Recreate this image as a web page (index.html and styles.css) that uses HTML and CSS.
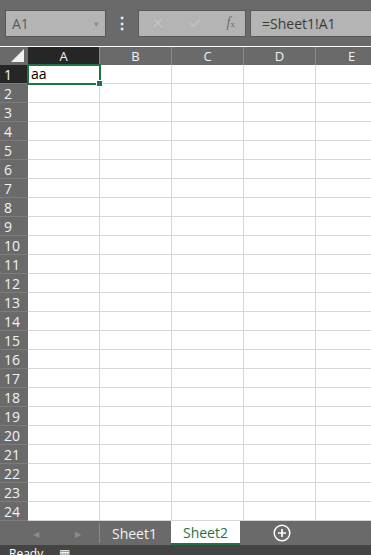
FILE: index.html
```html
<!DOCTYPE html>
<html>
<head>
    <title>Sheet</title>
    <meta charset="utf-8">
    <link rel="stylesheet" href="styles.css">
</head>
<body>

<div class="toolbar">
    <div class="name-box">
        <span>A1</span>
        <span class="drop">&#9662;</span>
    </div>
    <div class="dots">&#8942;</div>
    <div class="fx-buttons">
        <svg width="10" height="10" viewBox="0 0 10 10"><path d="M1 1L9 9M9 1L1 9" stroke="#c4c4c4" stroke-width="1.4"/></svg>
        <svg width="12" height="10" viewBox="0 0 12 10"><path d="M1 5L4.5 8.5L11 1.5" stroke="#c4c4c4" stroke-width="1.4" fill="none"/></svg>
        <span class="fx"><i>f</i><small>x</small></span>
    </div>
    <div class="formula">=Sheet1!A1</div>
</div>

<div class="sheet" id="sheet">
    <div class="corner"><div class="tri"></div></div>
    <div class="col-head selected">A</div>
    <div class="col-head">B</div>
    <div class="col-head">C</div>
    <div class="col-head">D</div>
    <div class="col-head">E</div>
    <div class="selection"><div class="handle"></div></div>
</div>

<div class="tabs">
    <div class="arrows">
        <span>&#9664;</span>
        <span>&#9654;</span>
    </div>
    <div class="tab">Sheet1</div>
    <div class="tab active">Sheet2</div>
    <div class="add">
        <svg width="18" height="18" viewBox="0 0 18 18"><circle cx="9" cy="9" r="7.8" stroke="#fff" stroke-width="1.5" fill="none"/><path d="M9 5V13M5 9H13" stroke="#fff" stroke-width="1.7"/></svg>
    </div>
</div>

<div class="status">Ready &nbsp; &nbsp; &#9638;</div>

<script>
(function () {
    var sheet = document.getElementById("sheet");
    var cols = 5;
    for (var r = 1; r <= 24; r++) {
        var head = document.createElement("div");
        head.className = "row-head" + (r === 1 ? " selected" : "");
        head.textContent = r;
        sheet.appendChild(head);
        for (var c = 0; c < cols; c++) {
            var cell = document.createElement("div");
            cell.className = "cell";
            if (r === 1 && c === 0) cell.textContent = "aa";
            sheet.appendChild(cell);
        }
    }
})();
</script>

</body>
</html>
```

FILE: styles.css
```css
body {
    margin: 0px;
    width: 371px;
    height: 555px;
    overflow: hidden;
    background: #6a6a6a;
    font-family: "Open Sans", "Noto Sans", sans-serif;
}

.toolbar {
    display: flex;
    align-items: center;
    height: 46px;
    padding-left: 5px;
    background: #6a6a6a;
    box-sizing: border-box;
}

.name-box {
    display: flex;
    align-items: center;
    justify-content: space-between;
    width: 101px;
    height: 27px;
    box-sizing: border-box;
    padding: 0px 6px 0px 6px;
    background: #b4b4b4;
    border: 1px solid #575757;
    color: #5a5a5a;
    font-size: 14px;
}

.name-box .drop {
    font-size: 9px;
    color: #8a8a8a;
}

.dots {
    width: 32px;
    text-align: center;
    color: #f0f0f0;
    font-size: 16px;
    font-weight: bold;
}

.fx-buttons {
    display: flex;
    align-items: center;
    justify-content: space-between;
    width: 108px;
    height: 27px;
    box-sizing: border-box;
    padding: 0px 10px 0px 14px;
    background: #b4b4b4;
    border: 1px solid #575757;
}

.fx {
    font-family: "Liberation Serif", serif;
    color: #6a6a6a;
    font-size: 14px;
}

.fx small {
    font-size: 9px;
}

.formula {
    flex: 1;
    height: 27px;
    margin-left: 4px;
    box-sizing: border-box;
    padding-left: 11px;
    line-height: 25px;
    background: #b4b4b4;
    border: 1px solid #575757;
    border-right: none;
    color: #3a3a3a;
    font-size: 14px;
}

.sheet {
    position: relative;
    display: grid;
    grid-template-columns: 28px repeat(5, 72px);
    grid-template-rows: 18px;
    grid-auto-rows: 19px;
    width: 388px;
    padding-top: 1px;
    background: #fff;
}

.corner,
.col-head,
.row-head {
    background: #6a6a6a;
    color: #f2f2f2;
    box-sizing: border-box;
}

.corner {
    position: relative;
    border-right: 1px solid #6a6a6a;
}

.tri {
    position: absolute;
    right: 3px;
    bottom: 3px;
    width: 0px;
    height: 0px;
    border-left: 13px solid transparent;
    border-bottom: 13px solid #f2f2f2;
}

.col-head {
    text-align: center;
    font-size: 13px;
    line-height: 18px;
    border-right: 1px solid #8c8c8c;
}

.col-head.selected,
.row-head.selected {
    background: #262626;
}

.row-head {
    padding-left: 4px;
    font-size: 14px;
    line-height: 19px;
    border-bottom: 1px solid #7c7c7c;
}

.cell {
    box-sizing: border-box;
    border-right: 1px solid #d6d6d6;
    border-bottom: 1px solid #d6d6d6;
    padding-left: 3px;
    font-size: 14px;
    line-height: 18px;
    color: #000;
}

.selection {
    position: absolute;
    left: 27px;
    top: 18px;
    width: 74px;
    height: 21px;
    border: 2px solid #217346;
    box-sizing: border-box;
}

.handle {
    position: absolute;
    right: -4px;
    bottom: -4px;
    width: 5px;
    height: 5px;
    background: #217346;
    border: 1px solid #fff;
}

.tabs {
    display: flex;
    align-items: stretch;
    height: 24px;
    background: #6a6a6a;
    color: #f2f2f2;
    font-size: 14px;
}

.arrows {
    display: flex;
    align-items: center;
    justify-content: space-around;
    width: 100px;
    padding-left: 15px;
    box-sizing: border-box;
    font-size: 8px;
    color: #8c8c8c;
    border-right: 1px solid #8a8a8a;
    margin: 2px 0px 2px 0px;
}

.tab {
    display: flex;
    align-items: center;
    padding: 0px 12px 0px 12px;
}

.tab.active {
    background: #fff;
    color: #217346;
    border-bottom: 2px solid #217346;
    margin-left: 2px;
}

.add {
    display: flex;
    align-items: center;
    margin-left: 33px;
}

.status {
    height: 10px;
    background: #444;
    color: #fff;
    font-size: 12px;
    line-height: 18px;
    padding-left: 9px;
    overflow: hidden;
}
```
